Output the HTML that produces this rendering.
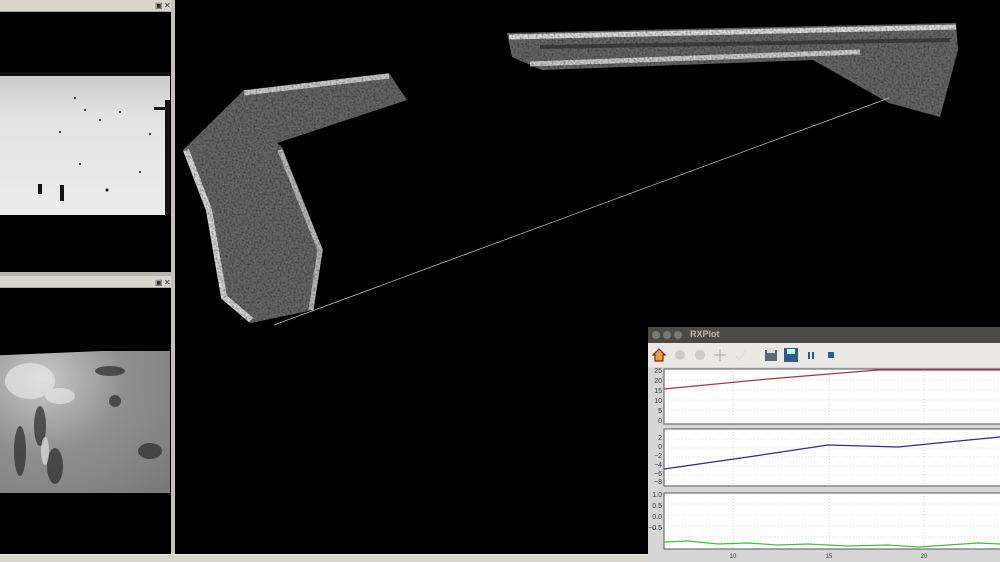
<!DOCTYPE html>
<html><head><meta charset="utf-8"><style>
*{margin:0;padding:0;box-sizing:border-box}
body{width:1000px;height:562px;overflow:hidden;background:#000;position:relative;font-family:"Liberation Sans",sans-serif}
.abs{position:absolute}
.tb{background:#d9d6ce;height:12px;left:0;width:171px;border-bottom:1px solid #a9a69e}
.ic{position:absolute;top:1px;font-size:8px;color:#333;line-height:10px}
</style></head><body>
<div class="abs tb" style="top:0"></div>
<div class="ic" style="left:155px;top:1px">▣</div><div class="ic" style="left:164px;top:1px">✕</div>
<div class="abs" style="left:0;top:72px;width:170px;height:143px;background:linear-gradient(#c8c8c8,#e2e2e2 30%,#ececec)"></div>
<svg class="abs" style="left:0;top:72px" width="170" height="143">
<g fill="#111"><rect x="38" y="112" width="4" height="10"/><rect x="60" y="113" width="4" height="16"/><rect x="165" y="28" width="5" height="115"/><rect x="154" y="35" width="12" height="3"/><rect x="0" y="0" width="170" height="4"/>
<circle cx="75" cy="26" r="1"/><circle cx="85" cy="38" r="1"/><circle cx="60" cy="60" r="1"/><circle cx="100" cy="48" r="1"/><circle cx="120" cy="40" r="1"/><circle cx="150" cy="62" r="1"/><circle cx="80" cy="92" r="1"/><circle cx="107" cy="118" r="1.5"/><circle cx="140" cy="100" r="1"/></g></svg>
<div class="abs" style="left:0;top:272px;width:171px;height:4px;background:#b8b5ad"></div>
<div class="abs tb" style="top:276px"></div>
<div class="ic" style="left:155px;top:278px">▣</div><div class="ic" style="left:164px;top:278px">✕</div>
<div class="abs" style="left:0;top:351px;width:170px;height:142px;background:radial-gradient(ellipse at 25% 20%,#c8c8c8,#909090 45%,#787878);clip-path:polygon(0 3%,60% 0,100% 0,100% 100%,0 100%)"></div>
<svg class="abs" style="left:0;top:351px" width="170" height="142"><g fill="#2a2a2a" opacity=".7">
<ellipse cx="20" cy="100" rx="6" ry="25"/><ellipse cx="55" cy="115" rx="8" ry="18"/><ellipse cx="150" cy="100" rx="12" ry="8"/><ellipse cx="115" cy="50" rx="6" ry="6"/><ellipse cx="110" cy="20" rx="15" ry="5"/><ellipse cx="40" cy="75" rx="6" ry="20"/></g>
<g fill="#eee" opacity=".6"><ellipse cx="30" cy="30" rx="25" ry="18"/><ellipse cx="60" cy="45" rx="15" ry="8"/><ellipse cx="45" cy="100" rx="4" ry="14"/></g></svg>
<div class="abs" style="left:171px;top:0;width:4px;height:556px;background:#c4c1b9"></div>
<div class="abs" style="left:0;top:554px;width:1000px;height:8px;background:#d9d6ce;border-top:1px solid #eee"></div>
<svg class="abs" style="left:0;top:0" width="1000" height="562">
<defs><filter id="n" x="0" y="0" width="100%" height="100%"><feTurbulence type="fractalNoise" baseFrequency="0.5" numOctaves="2" seed="3"/><feColorMatrix type="matrix" values="0 0 0 0 0  0 0 0 0 0  0 0 0 0 0  1.4 0 0 0 -0.5"/><feComposite in2="SourceGraphic" operator="in" result="d"/><feMerge><feMergeNode in="SourceGraphic"/><feMergeNode in="d"/></feMerge></filter></defs>
<g filter="url(#n)">
<polygon points="244,90 389,73 407,100 277,143 282,147 323,250 313,310 251,323 221,297 206,210 183,150" fill="#666"/>
<polygon points="507,33 956,23 958,50 940,117 889,103 813,60 542,70 512,57" fill="#666"/>
<polyline points="186,150 209,210 224,297 251,320" fill="none" stroke="#d8d8d8" stroke-width="6"/>
<polyline points="280,150 320,250 311,310" fill="none" stroke="#bbb" stroke-width="5"/>
<polyline points="244,93 389,76" fill="none" stroke="#ccc" stroke-width="5"/>
<polyline points="509,37 956,27" fill="none" stroke="#ddd" stroke-width="5"/>
<polyline points="530,64 860,52" fill="none" stroke="#ccc" stroke-width="5"/>
</g>
<polyline points="540,47 950,40" fill="none" stroke="#222" stroke-width="4" opacity=".6"/>
<line x1="274" y1="325" x2="889" y2="98" stroke="#bbb" stroke-width="0.8"/>
</svg>
<div class="abs" style="left:648px;top:327px;width:352px;height:235px;background:#d6d6d6">
<div style="height:16px;background:#4c4a46;position:relative">
<span class="abs" style="left:4px;top:4px;width:8px;height:8px;border-radius:50%;background:#7a7873"></span>
<span class="abs" style="left:15px;top:4px;width:8px;height:8px;border-radius:50%;background:#7a7873"></span>
<span class="abs" style="left:26px;top:4px;width:8px;height:8px;border-radius:50%;background:#7a7873"></span>
<span class="abs" style="left:42px;top:2px;font-size:9px;color:#bdbab4;font-weight:bold">RXPlot</span></div>
<div style="height:24px;background:#ebe9e6;position:relative">
<svg width="352" height="24">
<polygon points="11,6 5,12 7,12 7,18 15,18 15,12 17,12" fill="#e0a040" stroke="#8b2020" stroke-width="1.2"/>
<circle cx="32" cy="12" r="5" fill="#ccc"/><circle cx="52" cy="12" r="5" fill="#ccc"/>
<path d="M72 6v12M66 12h12" stroke="#bbb" stroke-width="1.5"/><path d="M88 13l3 4 6-9" stroke="#ddd" stroke-width="1.5" fill="none"/>
<rect x="117" y="7" width="12" height="11" fill="#5a6a70"/><rect x="119" y="5" width="8" height="5" fill="#ddd"/>
<rect x="136" y="5" width="14" height="14" fill="#2e5f8a"/><rect x="139" y="6" width="8" height="5" fill="#cfe"/>
<rect x="160" y="9" width="2" height="7" fill="#2a5a9a"/><rect x="164" y="9" width="2" height="7" fill="#2a5a9a"/>
<rect x="180" y="9" width="6" height="6" fill="#2a5a9a"/></svg></div>
</div>
<svg class="abs" style="left:648px;top:367px;font-family:'Liberation Sans';font-size:7px" width="352" height="195" fill="#333">
<g fill="#fff" stroke="#555" stroke-width="1"><rect x="16" y="2" width="340" height="55"/><rect x="16" y="62" width="340" height="57"/><rect x="16" y="126" width="340" height="56"/></g>
<g stroke="#bbb" stroke-dasharray="1,2" stroke-width=".6">
<path d="M85 2v55M181 2v55M276 2v55M85 62v57M181 62v57M276 62v57M85 126v56M181 126v56M276 126v56"/>
<path d="M16 13h340M16 23h340M16 33h340M16 43h340M16 72h340M16 81h340M16 90h340M16 99h340M16 108h340M16 137h340M16 148h340M16 159h340M16 170h340"/></g>
<polyline points="16,22 120,12 230,3 352,3" fill="none" stroke="#b03040" stroke-width="1.2"/>
<polyline points="16,102 100,90 180,78 250,80 300,75 352,70" fill="none" stroke="#303080" stroke-width="1.2"/>
<polyline points="16,175 40,174 70,177 100,176 130,178 160,177 200,179 240,178 270,180 300,178 330,176 352,177" fill="none" stroke="#40c040" stroke-width="1.2"/>
<g text-anchor="end"><text x="14" y="6">25</text><text x="14" y="16">20</text><text x="14" y="26">15</text><text x="14" y="36">10</text><text x="14" y="46">5</text><text x="14" y="56">0</text>
<text x="14" y="73">2</text><text x="14" y="82">0</text><text x="14" y="91">−2</text><text x="14" y="100">−4</text><text x="14" y="109">−6</text><text x="14" y="117">−8</text>
<text x="14" y="130">1.0</text><text x="14" y="141">0.5</text><text x="14" y="152">0.0</text><text x="14" y="163">−0.5</text></g>
<g text-anchor="middle" font-size="6"><text x="85" y="191">10</text><text x="181" y="191">15</text><text x="276" y="191">20</text></g>
</svg>
</body></html>
